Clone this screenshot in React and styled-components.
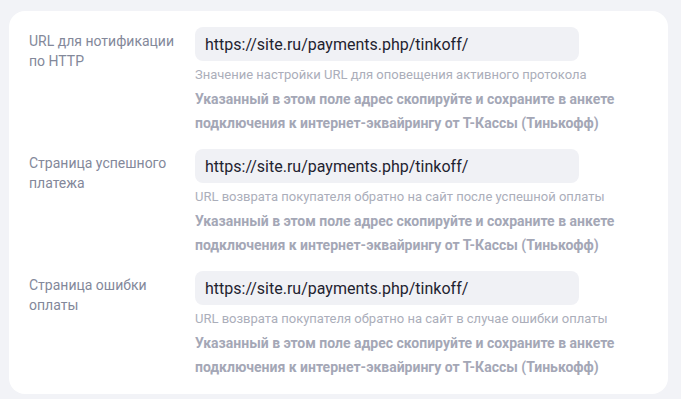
import React from "react";
import styled, { createGlobalStyle } from "styled-components";

const Global = createGlobalStyle`
  html, body { margin: 0; padding: 0; background: #f2f3f7; }
  body { font-family: Roboto, "Noto Sans", sans-serif; }
`;

const Page = styled.div`
  padding: 11px 13px 6px 9px;
`;

const Card = styled.div`
  background: #ffffff;
  border-radius: 16px;
  padding: 16px 20px 15px 20px;
  display: flex;
  flex-direction: column;
  gap: 14px;
`;

const Row = styled.div`
  display: grid;
  grid-template-columns: 166px 384px;
  align-items: start;
`;

const Label = styled.div`
  font-size: 14px;
  line-height: 20px;
  color: #83889a;
  padding-top: 4px;
  padding-right: 12px;
`;

const Field = styled.div`
  display: flex;
  flex-direction: column;
`;

const Input = styled.input`
  box-sizing: border-box;
  width: 384px;
  height: 34px;
  border: none;
  outline: none;
  border-radius: 8px;
  background: #f0f1f5;
  padding: 0 10px;
  font-family: inherit;
  font-size: 16px;
  color: #1f2330;
  margin-bottom: 2px;
`;

const Hint = styled.div`
  font-size: ${(p) => (p.$bold ? "14px" : "13px")};
  line-height: 24px;
  color: ${(p) => (p.$bold ? "#a4a7b6" : "#abaeba")};
  white-space: nowrap;
  font-weight: ${(p) => (p.$bold ? 700 : 400)};
`;

const rows = [
  {
    label: "URL для нотификации по HTTP",
    hint: "Значение настройки URL для оповещения активного протокола",
  },
  {
    label: "Страница успешного платежа",
    hint: "URL возврата покупателя обратно на сайт после успешной оплаты",
  },
  {
    label: "Страница ошибки оплаты",
    hint: "URL возврата покупателя обратно на сайт в случае ошибки оплаты",
  },
];

export default function App() {
  return (
    <>
      <Global />
      <Page>
        <Card>
          {rows.map((r) => (
            <Row key={r.label}>
              <Label>{r.label}</Label>
              <Field>
                <Input readOnly value="https://site.ru/payments.php/tinkoff/" />
                <Hint>{r.hint}</Hint>
                <Hint $bold>Указанный в этом поле адрес скопируйте и сохраните в анкете</Hint>
                <Hint $bold>подключения к интернет-эквайрингу от Т-Кассы (Тинькофф)</Hint>
              </Field>
            </Row>
          ))}
        </Card>
      </Page>
    </>
  );
}
